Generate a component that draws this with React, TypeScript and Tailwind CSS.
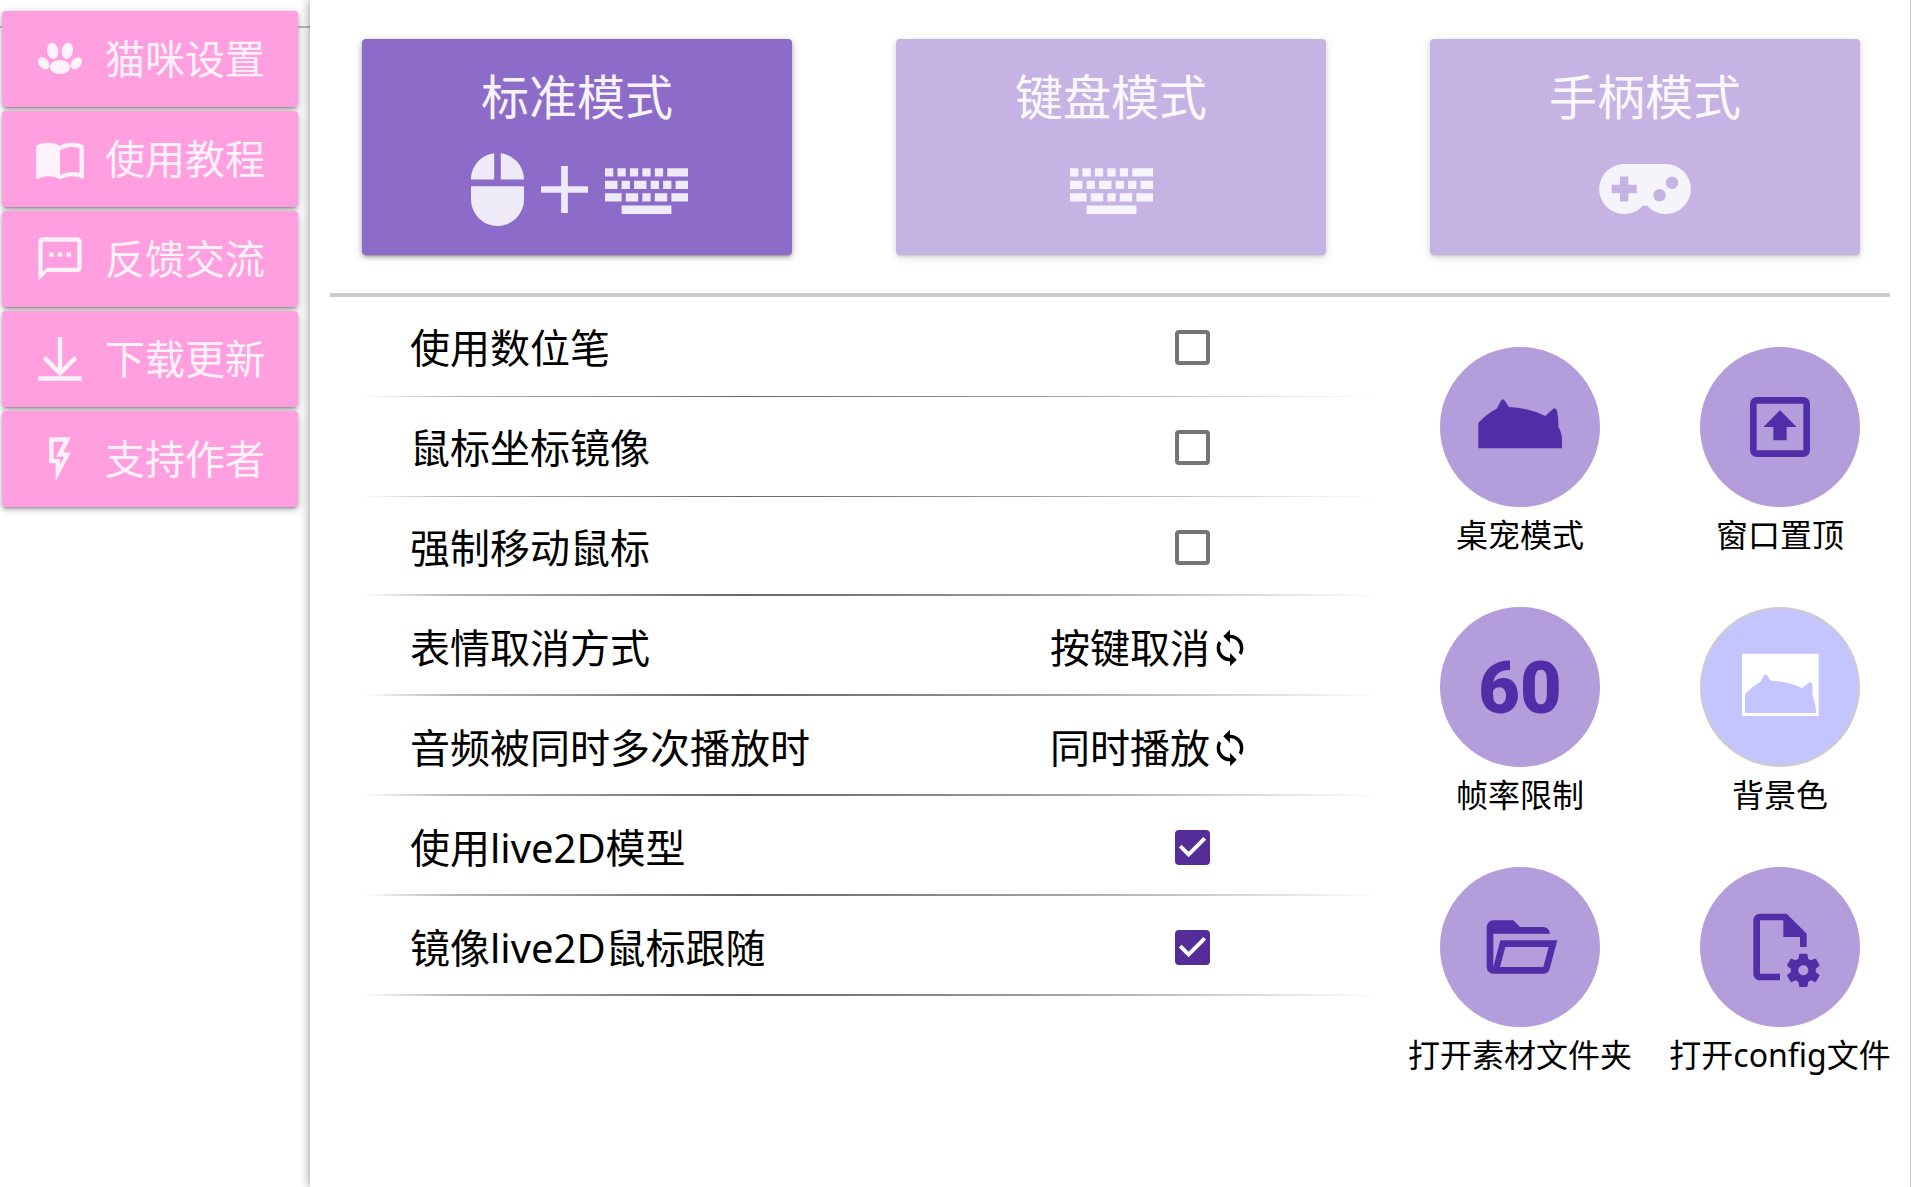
import { useState, type ReactNode } from "react";
import { MdOutlineTextsms } from "react-icons/md";

const BOOK =
  "M21,5C19.89,4.65 18.67,4.5 17.5,4.5C15.55,4.5 13.45,4.9 12,6C10.55,4.9 8.45,4.5 6.5,4.5C4.55,4.5 2.45,4.9 1,6V20.65C1,20.9 1.25,21.15 1.5,21.15C1.6,21.15 1.65,21.1 1.75,21.1C3.1,20.45 5.05,20 6.5,20C8.45,20 10.55,20.4 12,21.5C13.35,20.65 15.8,20 17.5,20C19.15,20 20.85,20.3 22.25,21.05C22.35,21.1 22.4,21.1 22.5,21.1C22.75,21.1 23,20.85 23,20.6V6C22.4,5.55 21.75,5.25 21,5M21,18.5C19.9,18.15 18.7,18 17.5,18C15.8,18 13.35,18.65 12,19.5V8C13.35,7.15 15.8,6.5 17.5,6.5C18.7,6.5 19.9,6.65 21,7V18.5Z";
const COLLAPSE_DOWN =
  "M19.92,12.08L12,20L4.08,12.08L5.5,10.67L11,16.17V2H13V16.17L18.5,10.66L19.92,12.08M12,20H2V22H22V20H12Z";
const FLASH = "M7,2H17L13.5,9H17L10,22V14H7V2M9,4V12H12V14.66L14,11H10.24L13.76,4H9Z";
const MOUSE =
  "M11,1.07C7.05,1.56 4,4.92 4,9H11M4,15A8,8 0 0,0 12,23A8,8 0 0,0 20,15V11H4M13,1.07V9H20C20,4.92 16.94,1.56 13,1.07Z";
const KEYBOARD =
  "M6,16H18V18H6V16M6,13V15H2V13H6M7,15V13H10V15H7M11,15V13H13V15H11M14,15V13H17V15H14M18,15V13H22V15H18M2,10H5V12H2V10M19,12V10H22V12H19M18,12H16V10H18V12M8,12H6V10H8V12M12,12H9V10H12V12M15,12H13V10H15V12M2,9V7H4V9H2M5,9V7H7V9H5M8,9V7H10V9H8M11,9V7H13V9H11M14,9V7H16V9H14M17,9V7H22V9H17Z";
const GAMEPAD =
  "M7,6H17A6,6 0 0,1 23,12A6,6 0 0,1 17,18C15.22,18 13.63,17.23 12.53,16H11.47C10.37,17.23 8.78,18 7,18A6,6 0 0,1 1,12A6,6 0 0,1 7,6M6,9V11H4V13H6V15H8V13H10V11H8V9H6M15.5,12A1.5,1.5 0 0,0 14,13.5A1.5,1.5 0 0,0 15.5,15A1.5,1.5 0 0,0 17,13.5A1.5,1.5 0 0,0 15.5,12M18.5,9A1.5,1.5 0 0,0 17,10.5A1.5,1.5 0 0,0 18.5,12A1.5,1.5 0 0,0 20,10.5A1.5,1.5 0 0,0 18.5,9Z";
const SYNC =
  "M12,18A6,6 0 0,1 6,12C6,11 6.25,10.03 6.7,9.2L5.24,7.74C4.46,8.97 4,10.43 4,12A8,8 0 0,0 12,20V23L16,19L12,15M12,4V1L8,5L12,9V6A6,6 0 0,1 18,12C18,13 17.75,13.97 17.3,14.8L18.76,16.26C19.54,15.03 20,13.57 20,12A8,8 0 0,0 12,4Z";
const WINDOW_TOP =
  "M5,3H19A2,2 0 0,1 21,5V19A2,2 0 0,1 19,21H5A2,2 0 0,1 3,19V5A2,2 0 0,1 5,3M5,5V19H19V5H5M12,7L17,12H14V16H10V12H7L12,7Z";
const FOLDER_OPEN =
  "M6.1,10L4,18V8H21A2,2 0 0,0 19,6H12L10,4H4A2,2 0 0,0 2,6V18A2,2 0 0,0 4,20H19C19.9,20 20.7,19.4 20.9,18.5L23.2,10H6.1M19,18H6L7.6,12H20.6L19,18Z";
const FILE_COG =
  "M6 2C4.89 2 4 2.9 4 4V20C4 21.11 4.89 22 6 22H12V20H6V4H13V9H18V12H20V8L14 2M18 14C17.87 14 17.76 14.09 17.74 14.21L17.55 15.53C17.25 15.66 16.96 15.82 16.7 16L15.46 15.5C15.35 15.5 15.22 15.5 15.15 15.63L14.15 17.36C14.09 17.47 14.11 17.6 14.21 17.68L15.27 18.5C15.25 18.67 15.24 18.83 15.24 19C15.24 19.17 15.25 19.33 15.27 19.5L14.21 20.32C14.12 20.4 14.09 20.53 14.15 20.64L15.15 22.37C15.21 22.5 15.34 22.5 15.46 22.5L16.7 22C16.96 22.18 17.24 22.35 17.55 22.47L17.74 23.79C17.76 23.91 17.86 24 18 24H20C20.11 24 20.22 23.91 20.24 23.79L20.43 22.47C20.73 22.34 21 22.18 21.27 22L22.5 22.5C22.63 22.5 22.76 22.5 22.83 22.37L23.83 20.64C23.89 20.53 23.86 20.4 23.77 20.32L22.7 19.5C22.72 19.33 22.74 19.17 22.74 19C22.74 18.83 22.73 18.67 22.7 18.5L23.76 17.68C23.85 17.6 23.88 17.47 23.82 17.36L22.82 15.63C22.76 15.5 22.63 15.5 22.5 15.5L21.27 16C21 15.82 20.73 15.65 20.42 15.53L20.23 14.21C20.22 14.09 20.11 14 20 14M19 17.5C19.83 17.5 20.5 18.17 20.5 19C20.5 19.83 19.83 20.5 19 20.5C18.16 20.5 17.5 19.83 17.5 19C17.5 18.17 18.17 17.5 19 17.5Z";

function Icon({ d, className, box = "0 0 24 24" }: { d: string; className: string; box?: string }) {
  return (
    <svg viewBox={box} className={className} fill="currentColor" aria-hidden="true">
      <path d={d} />
    </svg>
  );
}

function Paw() {
  return (
    <svg viewBox="0 0 52 52" className="size-[52px]" fill="currentColor" aria-hidden="true">
      <ellipse cx="18.7" cy="17.8" rx="5.6" ry="8.2" transform="rotate(-10 18.7 17.8)" />
      <ellipse cx="33.3" cy="17.8" rx="5.6" ry="8.2" transform="rotate(10 33.3 17.8)" />
      <ellipse cx="9.6" cy="30.2" rx="4.8" ry="6.8" transform="rotate(-40 9.6 30.2)" />
      <ellipse cx="42.4" cy="30.2" rx="4.8" ry="6.8" transform="rotate(40 42.4 30.2)" />
      <ellipse cx="26" cy="34" rx="10.2" ry="7" />
    </svg>
  );
}

function CatIcon() {
  return (
    <svg viewBox="120 51 480 480" className="size-40" fill="currentColor" aria-hidden="true">
      <path d="M235 278Q262 250 290 236L302 214Q308 202 315 213L327 231Q385 233 436 258L458 238Q467 230 471 243Q476 262 475 290Q487 310 486 335V355H235Z" />
    </svg>
  );
}

function BackgroundIcon() {
  return (
    <svg viewBox="900 51 480 480" className="size-40" aria-hidden="true">
      <path
        fill="#fff"
        fillRule="evenodd"
        d="M1026 191H1256V378H1026ZM1035 312V369H1248Q1248 343 1238 320L1237 287Q1235 271 1226 278L1206 294Q1162 274 1112 272L1102 257Q1096 248 1091 257L1082 275Q1058 288 1035 312Z"
      />
    </svg>
  );
}

const NAV: { label: string; icon: ReactNode }[] = [
  { label: "猫咪设置", icon: <Paw /> },
  { label: "使用教程", icon: <Icon d={BOOK} className="size-[52px]" /> },
  { label: "反馈交流", icon: <MdOutlineTextsms className="size-[52px]" /> },
  { label: "下载更新", icon: <Icon d={COLLAPSE_DOWN} className="size-[52px]" /> },
  { label: "支持作者", icon: <Icon d={FLASH} className="size-[52px]" /> },
];

const keyboard = <Icon d={KEYBOARD} box="2 6 20 12" className="h-[50px] w-[83px]" />;

const MODES: { label: string; icon: ReactNode }[] = [
  {
    label: "标准模式",
    icon: (
      <span className="flex items-center gap-[17px] pl-1">
        <Icon d={MOUSE} box="4 1 16 22" className="h-[73px] w-[53px]" />
        <Icon d="M19,13H13V19H11V13H5V11H11V5H13V11H19V13Z" box="5 5 14 14" className="size-[47px]" />
        {keyboard}
      </span>
    ),
  },
  { label: "键盘模式", icon: keyboard },
  { label: "手柄模式", icon: <Icon d={GAMEPAD} className="size-[100px]" /> },
];

type Setting = { id: string; label: string } & ({ checked: boolean } | { value: string });

const SETTINGS: Setting[] = [
  { id: "tablet", label: "使用数位笔", checked: false },
  { id: "mirror", label: "鼠标坐标镜像", checked: false },
  { id: "force", label: "强制移动鼠标", checked: false },
  { id: "face", label: "表情取消方式", value: "按键取消" },
  { id: "audio", label: "音频被同时多次播放时", value: "同时播放" },
  { id: "live2d", label: "使用live2D模型", checked: true },
  { id: "follow", label: "镜像live2D鼠标跟随", checked: true },
];

const PURPLE = "border-[#b39ddb] bg-[#b39ddb]";

const ACTIONS: { label: string; icon: ReactNode; tone: string }[] = [
  { label: "桌宠模式", icon: <CatIcon />, tone: PURPLE },
  { label: "窗口置顶", icon: <Icon d={WINDOW_TOP} className="size-20" />, tone: PURPLE },
  {
    label: "帧率限制",
    icon: <span className="pt-1 font-[Roboto] text-[72px] leading-none font-black">60</span>,
    tone: PURPLE,
  },
  { label: "背景色", icon: <BackgroundIcon />, tone: "border-[#cccccc] bg-[#c4c4ff]" },
  { label: "打开素材文件夹", icon: <Icon d={FOLDER_OPEN} className="size-20" />, tone: PURPLE },
  { label: "打开config文件", icon: <Icon d={FILE_COG} className="size-20" />, tone: PURPLE },
];

function CheckBox({ id, initial }: { id: string; initial: boolean }) {
  const [on, setOn] = useState(initial);
  return (
    <span className="relative mr-10 flex size-[35px]">
      <input
        id={id}
        type="checkbox"
        checked={on}
        onChange={(e) => setOn(e.target.checked)}
        className="size-full appearance-none rounded-[4px] border-4 border-[#757575] checked:border-[#542d99] checked:bg-[#542d99]"
      />
      {on && (
        <Icon
          d="M10,17L5,12L6.41,10.58L10,14.17L17.59,6.58L19,8L10,17Z"
          box="3 3 18 18"
          className="pointer-events-none absolute inset-0 text-white"
        />
      )}
    </span>
  );
}

function SettingRow({ setting, thin }: { setting: Setting; thin: boolean }) {
  return (
    <li>
      <div className="flex h-[97px] items-center justify-between pt-1 pr-[140px] pl-12 text-[40px] leading-[56px]">
        {"checked" in setting ? (
          <>
            <label htmlFor={setting.id}>{setting.label}</label>
            <CheckBox id={setting.id} initial={setting.checked} />
          </>
        ) : (
          <>
            <span id={setting.id}>{setting.label}</span>
            <button type="button" aria-describedby={setting.id} className="flex items-center">
              {setting.value}
              <Icon d={SYNC} className="size-10" />
            </button>
          </>
        )}
      </div>
      <div className={thin ? "flex h-[3px] items-end" : "flex h-[3px] items-start"}>
        <div
          className={
            (thin ? "h-px" : "h-0.5") +
            " w-full bg-[linear-gradient(to_right,transparent_0%,#b4b4b4_9%,#666666_37%,#999999_64%,#c4c4c4_79%,transparent_99%)]"
          }
        />
      </div>
    </li>
  );
}

export default function App() {
  const [mode, setMode] = useState(0);
  return (
    <div className="flex min-h-screen bg-white font-['Noto_Sans','Noto_Sans_CJK_SC',sans-serif] text-black">
      <aside className="relative w-[310px] shrink-0">
        <div className="absolute inset-x-0 top-[26px] h-0.5 bg-[#bdbdbd]" />
        <nav className="relative flex flex-col gap-1 pt-[11px] pr-3 pl-0.5">
          {NAV.map((item) => (
            <button
              key={item.label}
              type="button"
              className="flex h-24 items-center gap-[19px] rounded-[4px] bg-[#ff9fe0] pl-8 text-[40px] leading-[56px] text-[#fff2fb] shadow-[0_3px_2px_-2px_rgba(0,0,0,0.2),0_2px_4px_rgba(0,0,0,0.2),0_2px_10px_rgba(0,0,0,0.2)]"
            >
              {item.icon}
              {item.label}
            </button>
          ))}
        </nav>
      </aside>

      <main className="relative min-w-0 flex-1 border-r border-[#c8c8c8] bg-white shadow-[0_0_10px_rgba(0,0,0,0.45)]">
        <div className="grid grid-cols-3 gap-[104px] pt-[39px] pr-[50px] pl-[52px]">
          {MODES.map((item, i) => (
            <button
              key={item.label}
              type="button"
              aria-pressed={mode === i}
              onClick={() => setMode(i)}
              className={
                "flex h-[216px] flex-col items-center gap-[10px] rounded-[4px] bg-[#8d6bc8] pt-[26px] shadow-[0_3px_2px_-2px_rgba(0,0,0,0.2),0_2px_4px_rgba(0,0,0,0.2),0_2px_10px_rgba(0,0,0,0.2)]" +
                (mode === i ? "" : " opacity-50")
              }
            >
              <span className="text-5xl leading-[64px] text-[#f7f3fc]">{item.label}</span>
              <span className="flex h-[100px] items-center text-[#eeeaf8]">{item.icon}</span>
            </button>
          ))}
        </div>

        <hr className="mx-5 mt-[38px] h-1 border-0 bg-[#cccccc]" />

        <div className="flex">
          <ul className="min-w-0 flex-1 pl-[52px]">
            {SETTINGS.map((setting, i) => (
              <SettingRow key={setting.id} setting={setting} thin={i < 2} />
            ))}
          </ul>
          <div className="grid w-[520px] shrink-0 auto-rows-[260px] grid-cols-2 pt-[50px]">
            {ACTIONS.map((item) => (
              <button key={item.label} type="button" className="flex flex-col items-center gap-1 justify-self-center">
                <span
                  className={
                    "flex size-40 items-center justify-center rounded-full border-2 text-[#512da8] [&>svg]:shrink-0 " + item.tone
                  }
                >
                  {item.icon}
                </span>
                <span className="text-[32px] leading-[48px] whitespace-nowrap">{item.label}</span>
              </button>
            ))}
          </div>
        </div>
      </main>
    </div>
  );
}
